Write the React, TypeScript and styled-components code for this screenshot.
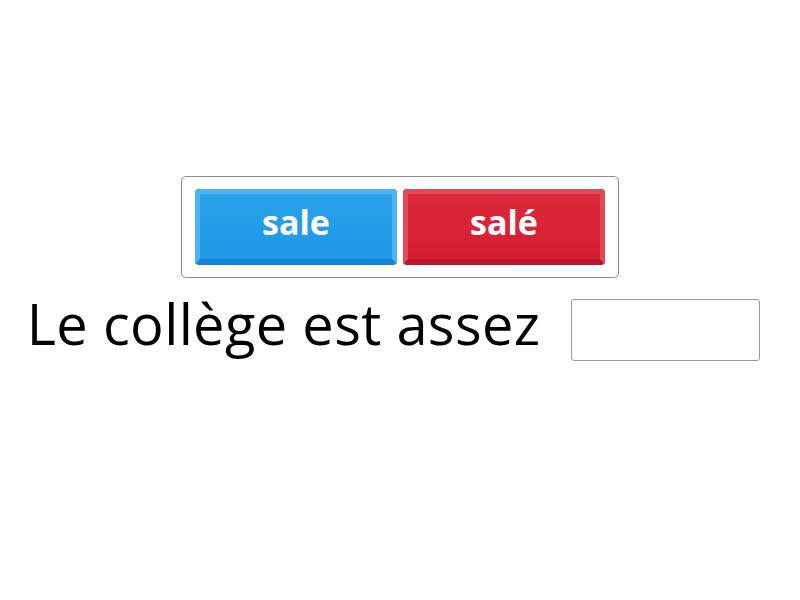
import React from "react";
import styled, { createGlobalStyle } from "styled-components";

const Global = createGlobalStyle`
  html, body { margin: 0; padding: 0; background: #ffffff; }
  body { font-family: "Open Sans", "Liberation Sans", sans-serif; }
`;

const Page = styled.div`
  width: 800px;
  height: 600px;
  display: flex;
  flex-direction: column;
  align-items: center;
  padding-top: 176px;
  box-sizing: border-box;
`;

const Choices = styled.div`
  display: flex;
  gap: 6px;
  padding: 12px 13px;
  border: 1px solid #8c8c8c;
  border-radius: 5px;
`;

type Tone = "blue" | "red";

const tones: Record<Tone, { face: string; light: string; dark: string; top: string }> = {
  blue: { face: "#1c98e6", light: "#52b1ef", dark: "#1582d0", top: "#2aa2ea" },
  red: { face: "#d71c30", light: "#e24a5c", dark: "#b3192a", top: "#dc2a3d" },
};

const ChoiceButton = styled.button<{ $tone: Tone }>`
  width: 202px;
  height: 76px;
  box-sizing: border-box;
  border-style: solid;
  border-width: 5px 5px 6px 5px;
  border-color: ${(p) => tones[p.$tone].light} ${(p) => tones[p.$tone].light}
    ${(p) => tones[p.$tone].dark} ${(p) => tones[p.$tone].light};
  border-radius: 4px;
  background: linear-gradient(
    ${(p) => tones[p.$tone].top},
    ${(p) => tones[p.$tone].face}
  );
  color: #ffffff;
  font-family: "Open Sans", "Liberation Sans", sans-serif;
  font-weight: 700;
  font-size: 34px;
  line-height: 1;
  padding: 0 0 10px 0;
  display: flex;
  align-items: center;
  justify-content: center;
  cursor: pointer;
`;

const Sentence = styled.div`
  display: flex;
  align-items: center;
  margin-top: 17px;
  margin-right: 13px;
  gap: 31px;
`;

const SentenceText = styled.span`
  font-family: "Open Sans", "Liberation Sans", sans-serif;
  font-size: 56px;
  letter-spacing: 0.35px;
  line-height: 1;
  color: #000000;
  margin-bottom: 14px;
  white-space: nowrap;
`;

const Blank = styled.div`
  width: 189px;
  height: 62px;
  box-sizing: border-box;
  border: 1px solid #9a9a9a;
  border-radius: 3px;
  background: #ffffff;
`;

export default function App() {
  return (
    <>
      <Global />
      <Page>
        <Choices>
          <ChoiceButton $tone="blue">sale</ChoiceButton>
          <ChoiceButton $tone="red">salé</ChoiceButton>
        </Choices>
        <Sentence>
          <SentenceText>Le collège est assez</SentenceText>
          <Blank />
        </Sentence>
      </Page>
    </>
  );
}
